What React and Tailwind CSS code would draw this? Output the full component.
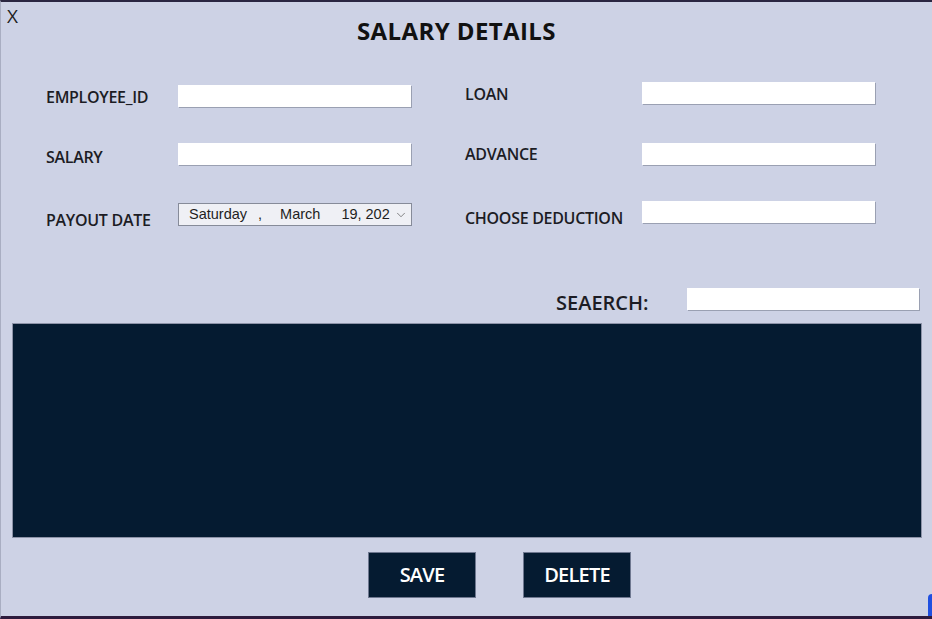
import React from 'react';
import { ChevronDown } from 'lucide-react';

const font = { fontFamily: '"Open Sans", "Noto Sans", sans-serif' };

const Field = ({ label, labelTop = 'mt-1', labelWidth = 'w-[132px]', children }) => (
  <div className="flex items-start">
    <span className={`${labelWidth} ${labelTop} shrink-0 whitespace-nowrap text-[16px] font-semibold text-[#1c1c24] leading-5 tracking-[-0.3px]`}>
      {label}
    </span>
    {children}
  </div>
);

const TextBox = () => (
  <div className="w-[233px] h-[22px] shrink-0 bg-white shadow-[1px_1px_0_#9aa0b2]" />
);

const DatePicker = () => (
  <div
    className="w-[234px] h-[23px] shrink-0 whitespace-nowrap overflow-hidden bg-[#eff0f5] border border-[#868b99] flex items-center pl-[10px] pr-1 text-[14.5px] text-[#1e1e1e]"
    style={{ fontFamily: '"Liberation Sans", Arial, sans-serif' }}
  >
    <span>Saturday</span>
    <span className="ml-[11px]">,</span>
    <span className="ml-[18px]">March</span>
    <span className="ml-[21px]">19, 202</span>
    <ChevronDown size={14} strokeWidth={1.2} className="ml-[4px] shrink-0 text-[#555]" />
  </div>
);

export default function App() {
  return (
    <div
      className="relative w-[932px] h-[619px] bg-[#cdd2e5] border-t-2 border-t-[#2a2641] border-b-[3px] border-b-[#2d1b3d] border-l border-l-[#a9aec2] overflow-hidden flex flex-col"
      style={font}
    >
      <button className="absolute left-[6px] top-[5px] text-[19px] leading-none text-[#222] font-normal">
        X
      </button>

      <h1 className="mt-[13px] ml-[356px] text-[24px] font-bold text-[#111] leading-8 tracking-[0.4px]">
        SALARY DETAILS
      </h1>

      <div className="flex mt-[38px]">
        <div className="ml-[45px] w-[419px] flex flex-col">
          <div>
            <Field label="EMPLOYEE_ID" labelTop="mt-[2px]">
              <TextBox />
            </Field>
          </div>
          <div className="mt-[36px]">
            <Field label="SALARY" labelTop="mt-[4px]">
              <TextBox />
            </Field>
          </div>
          <div className="mt-[36px]">
            <Field label="PAYOUT DATE" labelTop="mt-[7px]">
              <DatePicker />
            </Field>
          </div>
        </div>

        <div className="-mt-[3px] flex flex-col">
          <div>
            <Field label="LOAN" labelWidth="w-[177px]" labelTop="mt-[2px]">
              <TextBox />
            </Field>
          </div>
          <div className="mt-[39px]">
            <Field label="ADVANCE" labelWidth="w-[177px]" labelTop="mt-[1px]">
              <TextBox />
            </Field>
          </div>
          <div className="mt-[36px]">
            <Field label="CHOOSE DEDUCTION" labelWidth="w-[177px]" labelTop="mt-[7px]">
              <TextBox />
            </Field>
          </div>
        </div>
      </div>

      <div className="flex items-start mt-[58px] ml-[555px]">
        <span className="w-[131px] mt-[3px] text-[20px] font-semibold text-[#1c1c24] leading-6">SEAERCH:</span>
        <div className="w-[232px] h-[22px] bg-white shadow-[1px_1px_0_#9aa0b2]" />
      </div>

      <div className="mt-[8px] ml-[11px] w-[910px] h-[215px] bg-[#051b31] border border-[#8d93a8]" />

      <div className="flex gap-[47px] mt-[14px] ml-[367px]">
        <button
          className="w-[108px] h-[46px] bg-[#051b31] border border-[#6f7890] text-white text-[20px] font-semibold tracking-[-0.8px]"
        >
          SAVE
        </button>
        <button
          className="w-[108px] h-[46px] bg-[#051b31] border border-[#6f7890] text-white text-[20px] font-semibold tracking-[-0.8px]"
        >
          DELETE
        </button>
      </div>

      <div className="absolute right-0 bottom-0 w-[4px] h-[22px] bg-[#1f4fe0] rounded-tl-[4px]" />
    </div>
  );
}
